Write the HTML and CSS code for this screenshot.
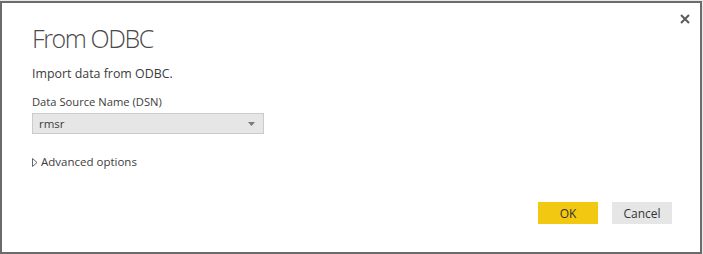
FILE: index.html
```html
<!DOCTYPE html>
<html lang="en">
<head>
    <meta charset="UTF-8">
    <title>From ODBC</title>
    <link rel="stylesheet" href="styles.css">
</head>
<body>
    <div class="dialog">
        <button class="close" aria-label="Close">
            <svg width="10" height="10" viewBox="0 0 10 10">
                <path d="M1 1 L9 9 M9 1 L1 9" stroke="#5a5a5a" stroke-width="2" fill="none"/>
            </svg>
        </button>

        <h1 class="title">From ODBC</h1>
        <p class="intro">Import data from ODBC.</p>

        <label class="field-label" for="dsn">Data Source Name (DSN)</label>
        <div class="select" id="dsn">
            <span>rmsr</span>
            <svg width="7" height="4" viewBox="0 0 7 4"><path d="M0 0 H7 L3.5 4 Z" fill="#7a7a7a"/></svg>
        </div>

        <div class="advanced">
            <svg width="6" height="9" viewBox="0 0 6 9"><path d="M0.5 0.5 L5 4.5 L0.5 8.5 Z" fill="none" stroke="#666" stroke-width="1"/></svg>
            <span>Advanced options</span>
        </div>

        <div class="footer">
            <button class="button primary">OK</button>
            <button class="button">Cancel</button>
        </div>
    </div>
</body>
</html>
```

FILE: styles.css
```css
* {
    margin: 0;
    padding: 0;
    box-sizing: border-box;
}

body {
    font-family: "Open Sans", "Noto Sans", sans-serif;
    background: #e9e9e9;
    width: 703px;
    height: 254px;
    overflow: hidden;
}

.dialog {
    position: relative;
    margin: 1px 0 0 0;
    width: 702px;
    height: 253px;
    border: 2px solid #6b6b6b;
    background: #fff;
    padding: 0 28px 0 30px;
    display: flex;
    flex-direction: column;
    align-items: flex-start;
    color: #3c3c3c;
}

.close {
    position: absolute;
    top: 11px;
    right: 10px;
    background: none;
    border: none;
    width: 10px;
    height: 10px;
    display: flex;
}

.title {
    font-weight: 300;
    font-size: 25px;
    letter-spacing: -1.4px;
    color: #4a4a4a;
    margin-top: 18px;
    line-height: 34px;
}

.intro {
    font-size: 12.4px;
    margin-top: 10px;
    line-height: 18px;
}

.field-label {
    font-size: 11.2px;
    margin-top: 11px;
    line-height: 16px;
}

.select {
    margin-top: 3px;
    width: 232px;
    height: 21px;
    background: #e6e6e6;
    border: 1px solid #cbcbcb;
    display: flex;
    align-items: center;
    justify-content: space-between;
    padding: 0 8px 0 6px;
    font-size: 11.5px;
}

.advanced {
    margin-top: 20px;
    display: flex;
    align-items: center;
    gap: 3px;
    font-size: 11.5px;
    line-height: 16px;
}

.footer {
    margin-top: auto;
    margin-bottom: 28px;
    align-self: stretch;
    display: flex;
    justify-content: flex-end;
    gap: 14px;
}

.button {
    width: 60px;
    height: 22px;
    border: none;
    background: #e6e6e6;
    color: #333;
    font-family: inherit;
    font-size: 12px;
}

.button.primary {
    background: #f2c811;
}
```
